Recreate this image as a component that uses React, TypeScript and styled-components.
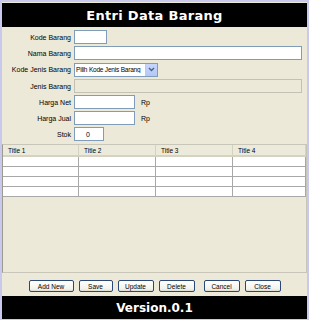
import React from "react";
import styled, { createGlobalStyle } from "styled-components";

const Global = createGlobalStyle`
  html, body { margin: 0; padding: 0; background: #ffffff; }
  body { font-family: "Liberation Sans", Arial, sans-serif; }
`;

const Frame = styled.div`
  width: 309px;
  height: 320px;
  box-sizing: border-box;
  border: 2px solid #c9c9ee;
  border-bottom-width: 1px;
  background: #ece9d8;
  display: flex;
  flex-direction: column;
`;

const Banner = styled.div`
  height: 24px;
  margin-top: 1px;
  background: #000;
  color: #fff;
  display: flex;
  align-items: center;
  justify-content: center;
  font-family: "DejaVu Sans", sans-serif;
  font-weight: bold;
  font-size: 13px;
  letter-spacing: 0.3px;
`;

const Form = styled.div`
  display: flex;
  flex-direction: column;
  gap: 2px;
  padding: 3px 0 0 0;
`;

const Row = styled.div<{ $h?: number }>`
  display: flex;
  align-items: center;
  height: ${(p) => p.$h ?? 14}px;
`;

const Label = styled.div`
  width: 69px;
  text-align: right;
  padding-right: 3px;
  font-size: 7px;
  color: #000;
  white-space: nowrap;
`;

const Input = styled.div<{ $w?: number; $disabled?: boolean; $grow?: boolean }>`
  box-sizing: border-box;
  height: 14px;
  width: ${(p) => (p.$w ? `${p.$w}px` : "auto")};
  flex: ${(p) => (p.$grow ? "1" : "none")};
  margin-right: ${(p) => (p.$grow ? "5px" : "0")};
  border: 1px solid ${(p) => (p.$disabled ? "#c3c1b4" : "#7f9db9")};
  background: ${(p) => (p.$disabled ? "#ece9d8" : "#fff")};
  font-size: 7px;
  display: flex;
  align-items: center;
  padding-left: 11px;
`;

const Select = styled.div`
  box-sizing: border-box;
  height: 14px;
  width: 84px;
  border: 1px solid #7f9db9;
  background: #fff;
  display: flex;
  align-items: center;
  font-size: 6.5px;
  letter-spacing: -0.2px;
  padding-left: 1px;
  white-space: nowrap;
  overflow: hidden;
`;

const SelectText = styled.span`
  flex: 1;
  overflow: hidden;
`;

const DropBtn = styled.div`
  width: 11px;
  height: 12px;
  flex: none;
  background: linear-gradient(#c6d6fc, #b3c8f8);
  border-left: 1px solid #b9cbf3;
  display: flex;
  align-items: center;
  justify-content: center;
`;

const Unit = styled.div`
  font-size: 7px;
  margin-left: 6px;
`;

const TablePane = styled.div`
  margin: 3px 0 0 0;
  flex: 1;
  border: 1px solid #c8c6b8;
  border-left-color: #9d9b90;
  background: #ece9d8;
  display: flex;
  flex-direction: column;
`;

const Grid = styled.div`
  display: grid;
  grid-template-columns: 76px 77px 77px 1fr;
`;

const HeadCell = styled.div`
  height: 12px;
  box-sizing: border-box;
  font-size: 6.5px;
  padding-left: 5px;
  display: flex;
  align-items: center;
  border-right: 1px solid #d6d2c2;
  border-bottom: 2px solid #d6d2c2;
  background: #ebeadb;
`;

const Cell = styled.div`
  height: 10px;
  box-sizing: border-box;
  background: #fff;
  border-right: 1px solid #a8a8a8;
  border-bottom: 1px solid #a8a8a8;
`;

const ButtonBar = styled.div`
  display: flex;
  justify-content: center;
  gap: 5px;
  padding: 7px 0 4px 0;
`;

const Btn = styled.div<{ $w: number; $ml?: number }>`
  box-sizing: border-box;
  width: ${(p) => p.$w}px;
  height: 12px;
  margin-left: ${(p) => p.$ml ?? 0}px;
  border: 1px solid #2a4778;
  border-radius: 2px;
  background: linear-gradient(#ffffff, #f3f2ec 80%, #dcdad0);
  font-size: 6.5px;
  display: flex;
  align-items: center;
  justify-content: center;
`;

const Footer = styled.div`
  height: 23px;
  background: #000;
  color: #fff;
  display: flex;
  align-items: center;
  justify-content: center;
  font-family: "DejaVu Sans", sans-serif;
  font-weight: bold;
  font-size: 12px;
`;

export default function App() {
  const rows = [0, 1, 2, 3];
  return (
    <>
      <Global />
      <Frame>
        <Banner>Entri Data Barang</Banner>
        <Form>
          <Row>
            <Label>Kode Barang</Label>
            <Input $w={33} />
          </Row>
          <Row>
            <Label>Nama Barang</Label>
            <Input $grow />
          </Row>
          <Row $h={15}>
            <Label>Kode Jenis Barang</Label>
            <Select>
              <SelectText>Pilih Kode Jenis Barang</SelectText>
              <DropBtn>
                <svg width="7" height="5" viewBox="0 0 7 5">
                  <path d="M1 1 L3.5 3.5 L6 1" stroke="#4d6185" strokeWidth="1.4" fill="none" />
                </svg>
              </DropBtn>
            </Select>
          </Row>
          <Row>
            <Label>Jenis Barang</Label>
            <Input $grow $disabled />
          </Row>
          <Row>
            <Label>Harga Net</Label>
            <Input $w={61} />
            <Unit>Rp</Unit>
          </Row>
          <Row>
            <Label>Harga Jual</Label>
            <Input $w={61} />
            <Unit>Rp</Unit>
          </Row>
          <Row>
            <Label>Stok</Label>
            <Input $w={30}>0</Input>
          </Row>
        </Form>
        <TablePane>
          <Grid>
            <HeadCell>Title 1</HeadCell>
            <HeadCell>Title 2</HeadCell>
            <HeadCell>Title 3</HeadCell>
            <HeadCell>Title 4</HeadCell>
            {rows.map((r) => (
              <React.Fragment key={r}>
                <Cell />
                <Cell />
                <Cell />
                <Cell />
              </React.Fragment>
            ))}
          </Grid>
        </TablePane>
        <ButtonBar>
          <Btn $w={45}>Add New</Btn>
          <Btn $w={34}>Save</Btn>
          <Btn $w={36}>Update</Btn>
          <Btn $w={36}>Delete</Btn>
          <Btn $w={36} $ml={4}>Cancel</Btn>
          <Btn $w={36}>Close</Btn>
        </ButtonBar>
        <Footer>Version.0.1</Footer>
      </Frame>
    </>
  );
}
